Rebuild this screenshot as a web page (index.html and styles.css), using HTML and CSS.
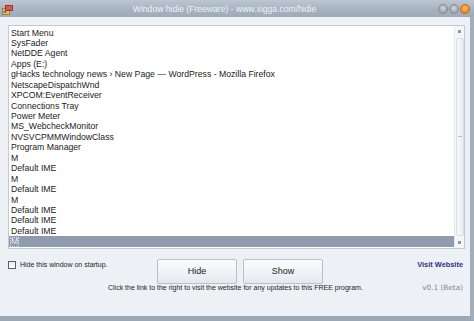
FILE: index.html
```html
<!DOCTYPE html>
<html>
<head>
<meta charset="utf-8">
<link rel="stylesheet" href="styles.css">
</head>
<body>
<div class="window">
  <div class="titlebar">
    <svg class="app-icon" width="11" height="10" viewBox="0 0 11 10">
      <rect x="0.5" y="3.5" width="7" height="6" fill="#e6c24a" stroke="#b07a2a" stroke-width="1"/>
      <rect x="3.5" y="0.5" width="7" height="5" fill="#d9534f" stroke="#9b3a2a" stroke-width="1"/>
      <rect x="1.5" y="6" width="3" height="2" fill="#5b7fc7"/>
    </svg>
    <div class="title">Window hidie (Freeware) - www.xigga.com/hidie</div>
    <div class="caption-btns">
      <span class="cbtn gray"></span>
      <span class="cbtn gray"></span>
      <span class="cbtn orange"></span>
    </div>
  </div>
  <div class="body">
    <div class="listbox">
      <ul class="items">
        <li>Start Menu</li>
        <li>SysFader</li>
        <li>NetDDE Agent</li>
        <li>Apps (E:)</li>
        <li>gHacks technology news › New Page — WordPress - Mozilla Firefox</li>
        <li>NetscapeDispatchWnd</li>
        <li>XPCOM:EventReceiver</li>
        <li>Connections Tray</li>
        <li>Power Meter</li>
        <li>MS_WebcheckMonitor</li>
        <li>NVSVCPMMWindowClass</li>
        <li>Program Manager</li>
        <li>M</li>
        <li>Default IME</li>
        <li>M</li>
        <li>Default IME</li>
        <li>M</li>
        <li>Default IME</li>
        <li>Default IME</li>
        <li>Default IME</li>
        <li class="selected"><span class="focus">M</span></li>
      </ul>
      <div class="scrollbar">
        <span class="arrow up"></span>
        <div class="thumb"><span class="grip"></span></div>
        <span class="arrow down"></span>
      </div>
    </div>
    <div class="row1">
      <label class="check"><span class="box"></span>Hide this window on startup.</label>
      <button class="btn">Hide</button>
      <button class="btn show">Show</button>
      <a class="link" href="#">Visit Website</a>
    </div>
    <div class="row2">
      <span class="info">Click the link to the right to visit the website for any updates to this FREE program.</span>
      <span class="version">v0.1 (Beta)</span>
    </div>
  </div>
</div>
</body>
</html>
```

FILE: styles.css
```css
html, body {
  margin: 0;
  padding: 0;
}
body {
  width: 474px;
  height: 321px;
  overflow: hidden;
  font-family: "Liberation Sans", Arial, sans-serif;
}
.window {
  width: 474px;
  height: 321px;
  display: flex;
  flex-direction: column;
  background: #edf0f4;
}
.titlebar {
  height: 17px;
  flex: none;
  display: flex;
  align-items: center;
  background: linear-gradient(#bcc6d1, #a6b2c0 60%, #9eaab8);
  padding-left: 2px;
}
.app-icon {
  flex: none;
  margin-top: 2px;
}
.title {
  flex: 1;
  text-align: center;
  font-size: 8.6px;
  color: #eef2f6;
  padding-right: 2px;
  white-space: nowrap;
}
.caption-btns {
  display: flex;
  gap: 1px;
  padding-right: 4px;
  margin-top: 1px;
}
.cbtn {
  width: 10px;
  height: 10px;
  border-radius: 50%;
  box-sizing: border-box;
}
.cbtn.gray {
  background: radial-gradient(circle at 50% 40%, #d6dbe1, #9aa3ad 70%, #7f8893);
  border: 1px solid #838c97;
}
.cbtn.orange {
  background: radial-gradient(circle at 50% 40%, #ffc07a, #f18a22 65%, #d46a0c);
  border: 1px solid #c9680f;
}
.body {
  flex: 1;
  display: flex;
  flex-direction: column;
  padding: 8px 5px 0 8px;
  border-right: 4px solid #a3aebb;
  border-bottom: 5px solid #9ca8b6;
}
.listbox {
  height: 221.5px;
  flex: none;
  display: flex;
  background: #fff;
  border: 1px solid #c3cad3;
}
.items {
  flex: 1;
  list-style: none;
  margin: 0;
  padding: 1.5px 0 0 0;
  font-size: 8.7px;
  line-height: 10.45px;
  color: #1b1b1b;
  overflow: hidden;
}
.items li {
  padding-left: 2px;
  white-space: nowrap;
  height: 10.45px;
}
.items li.selected {
  background: #8e9cad;
  color: #e4e8ee;
  padding-left: 1px;
}
.focus {
  display: inline-block;
  outline: 1px dotted #d6dce4;
  outline-offset: -1px;
  padding: 0 1px;
  line-height: 9.5px;
}
.scrollbar {
  width: 10px;
  flex: none;
  display: flex;
  flex-direction: column;
  align-items: center;
  background: #f3f5f8;
  border-left: 1px solid #e6e9ee;
  box-sizing: border-box;
}
.arrow {
  width: 3px;
  height: 3px;
  background: #8f98a3;
  margin: 4px 0;
}
.thumb {
  flex: 1;
  width: 8px;
  margin: 1px 0;
  border: 1px solid #d9dee5;
  border-radius: 2px;
  background: linear-gradient(90deg, #f8f9fb, #e9edf2);
  box-sizing: border-box;
  display: flex;
  align-items: center;
  justify-content: center;
}
.grip {
  width: 4px;
  height: 1px;
  background: #b9c0c9;
}
.row1 {
  display: flex;
  align-items: flex-start;
  margin-top: 10px;
  height: 25px;
}
.check {
  width: 149px;
  flex: none;
  display: flex;
  align-items: center;
  font-size: 7px;
  line-height: 12px;
  color: #1e1e1e;
}
.box {
  width: 8px;
  height: 8px;
  box-sizing: border-box;
  border: 1px solid #5b5f66;
  background: linear-gradient(#e9ecf0, #ffffff);
  margin-right: 4px;
}
.btn {
  width: 80px;
  height: 25px;
  flex: none;
  margin: 0;
  padding: 0;
  border: 1px solid #b9c0ca;
  border-radius: 2px;
  background: linear-gradient(#fbfcfd, #f1f3f6 50%, #e4e8ed);
  font-family: "Liberation Sans", Arial, sans-serif;
  font-size: 9px;
  color: #222;
}
.btn.show {
  margin-left: 6px;
}
.link {
  margin-left: auto;
  margin-right: 2px;
  font-size: 7.4px;
  font-weight: bold;
  line-height: 12px;
  color: #2c318c;
  text-decoration: none;
}
.row2 {
  display: flex;
  align-items: center;
  height: 8px;
  line-height: 8px;
  padding-left: 100px;
}
.info {
  font-size: 7px;
  color: #1e1e1e;
  white-space: nowrap;
}
.version {
  margin-left: auto;
  margin-right: 2px;
  font-family: "DejaVu Sans", sans-serif;
  font-size: 7.3px;
  color: #858a92;
}
```
